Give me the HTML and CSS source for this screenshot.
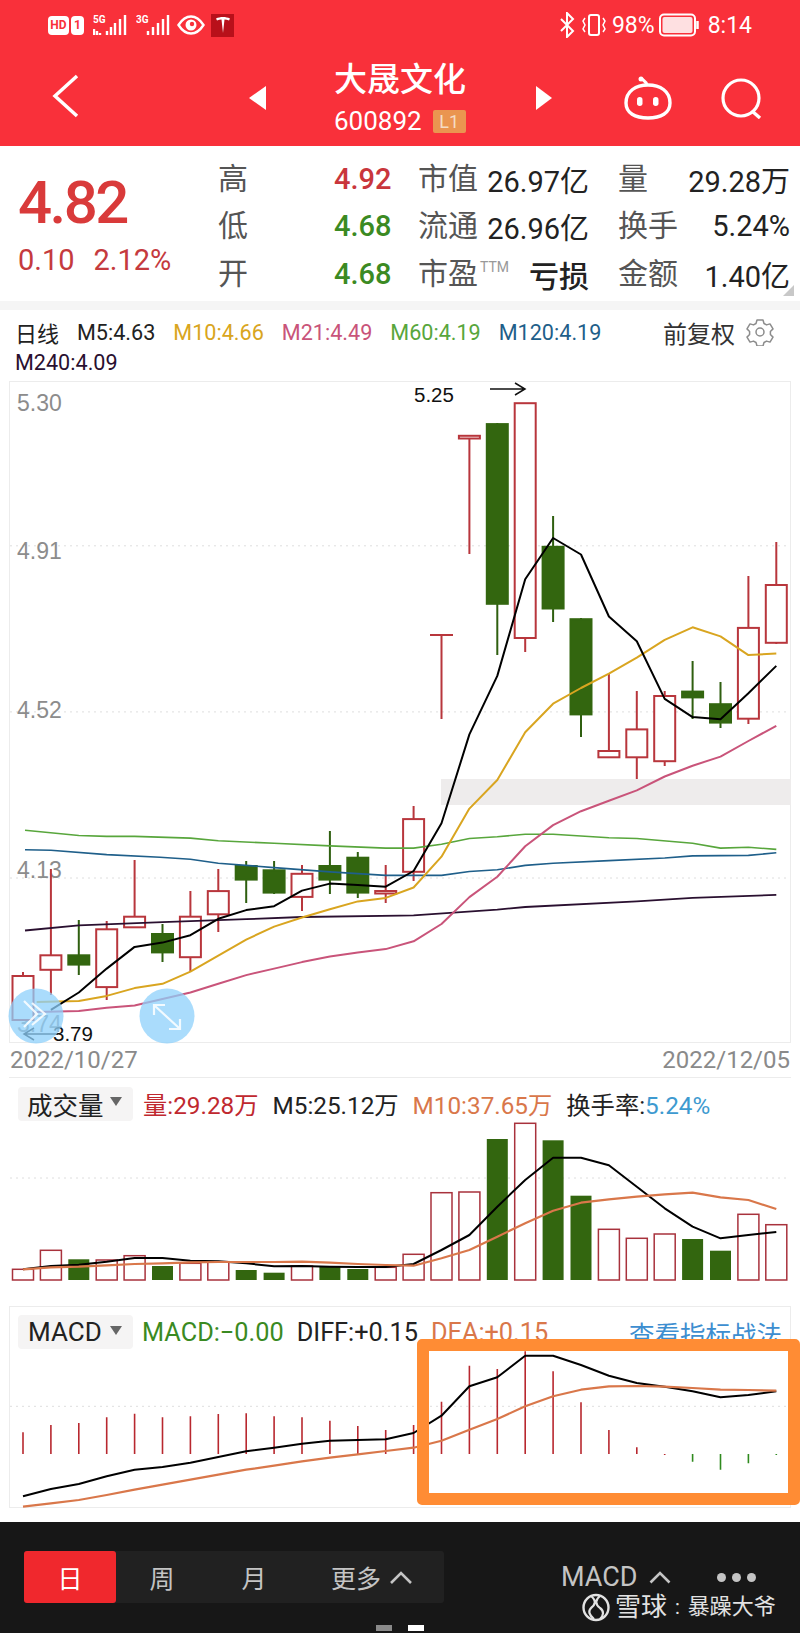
FILE: index.html
```html
<!DOCTYPE html>
<html lang="zh-CN">
<head>
  <meta charset="UTF-8">
  <meta name="viewport" content="width=device-width, initial-scale=1.0">
  <title>大晟文化 600892</title>
  <link rel="stylesheet" href="styles.css">
</head>
<body>
<div class="page">

  <!-- Red header -->
  <header class="header">
    <div class="status">
      <span class="sim sim-hd">HD</span>
      <span class="sim sim-one">1</span>
      <svg class="signal" width="36" height="22" viewBox="0 0 36 22">
        <text x="0" y="9" class="net">5G</text>
        <path d="M1 21v-6M4 21v-4M7 21v-2M14 21v-4M18 21v-8M22 21v-12M27 21v-16M32 21v-20" stroke="#fff" stroke-width="2.4" fill="none"/>
      </svg>
      <svg class="signal" width="34" height="22" viewBox="0 0 34 22">
        <text x="0" y="9" class="net">3G</text>
        <path d="M12 21v-4M17 21v-8M22 21v-12M27 21v-16M32 21v-20" stroke="#fff" stroke-width="2.4" fill="none"/>
      </svg>
      <svg class="eye" width="28" height="20" viewBox="0 0 28 20">
        <path d="M1.5 10C6 3 10 1.5 14 1.5S22 3 26.500 10C22 17 18 18.500 14 18.500S6 17 1.500 10Z" fill="none" stroke="#fff" stroke-width="2.400"/>
        <circle cx="14" cy="10" r="5.500" fill="#fff"/>
        <circle cx="15" cy="9" r="2.200" fill="#f9303a"/>
      </svg>
      <span class="tesla">
        <svg width="14" height="18" viewBox="0 0 14 18">
          <path d="M0 2.500C4 .5 10 .5 14 2.500L13 4.500C11.500 3.800 10 3.500 8.500 3.500L7 17 5.500 3.500C4 3.500 2.500 3.800 1 4.500Z" fill="#fff"/>
        </svg>
      </span>
      <span class="status-right">
        <svg width="17" height="26" viewBox="0 0 17 26">
          <path d="M2 7l12 12-6 6V1l6 6L2 19" fill="none" stroke="#fff" stroke-width="2"/>
        </svg>
        <svg class="vibrate" width="26" height="24" viewBox="0 0 26 24">
          <rect x="8" y="2" width="10" height="20" rx="2" fill="none" stroke="#fff" stroke-width="2"/>
          <path d="M4 5l-2 3 2 4-2 4 2 3M22 5l2 3-2 4 2 4-2 3" fill="none" stroke="#fff" stroke-width="1.500"/>
        </svg>
        <span class="pct">98%</span>
        <svg class="battery" width="41" height="24" viewBox="0 0 41 24">
          <rect x="1" y="1.500" width="35" height="21" rx="4" fill="none" stroke="#fff" stroke-width="2"/>
          <rect x="3.500" y="4" width="30" height="16" rx="2" fill="#fff" opacity=".85"/>
          <path d="M38.500 8v8" stroke="#fff" stroke-width="2.500"/>
        </svg>
        <span class="clock">8:14</span>
      </span>
    </div>
    <nav class="nav">
      <svg class="back" width="27" height="44" viewBox="0 0 27 44">
        <path d="M25 2L3 22l22 20" fill="none" stroke="#fff" stroke-width="3.500"/>
      </svg>
      <span class="tri tri-left"></span>
      <div class="title">
        <div class="name">大晟文化</div>
        <div class="code">600892<span class="level">L1</span></div>
      </div>
      <span class="tri tri-right"></span>
      <svg class="robot" width="50" height="44" viewBox="0 0 50 44">
        <path d="M24 9C23 5 21 5 19 3" fill="none" stroke="#fff" stroke-width="3"/>
        <circle cx="18" cy="3" r="2.500" fill="#fff"/>
        <path d="M25 9C37 9 47 15 47 27C47 37 38 42 25 42S3 37 3 27C3 15 13 9 25 9Z" fill="none" stroke="#fff" stroke-width="3.400"/>
        <rect x="14" y="21" width="5.500" height="9" rx="2.700" fill="#fff"/>
        <rect x="30" y="21" width="5.500" height="9" rx="2.700" fill="#fff"/>
      </svg>
      <svg class="search" width="42" height="41" viewBox="0 0 42 41">
        <circle cx="20" cy="20" r="18" fill="none" stroke="#fff" stroke-width="3.200"/>
        <path d="M31 33l8 7" fill="none" stroke="#fff" stroke-width="3.400"/>
      </svg>
    </nav>
  </header>

  <!-- Quote -->
  <section class="quote">
    <div class="price-block">
      <div class="price">4.82</div>
      <div class="change"><span>0.10</span><span>2.12%</span></div>
    </div>
    <div class="stats">
      <span class="lab">高</span><span class="num rise">4.92</span>
      <span class="lab">市值</span><span class="val">26.97亿</span>
      <span class="lab lab-end">量</span><span class="val">29.28万</span>

      <span class="lab">低</span><span class="num fall">4.68</span>
      <span class="lab">流通</span><span class="val">26.96亿</span>
      <span class="lab lab-end">换手</span><span class="val">5.24%</span>

      <span class="lab">开</span><span class="num fall">4.68</span>
      <span class="lab lab-ttm">市盈<sup>TTM</sup></span><span class="val val-loss">亏损</span>
      <span class="lab lab-end">金额</span><span class="val">1.40亿</span>
    </div>
    <span class="corner"></span>
  </section>

  <div class="strip"></div>

  <!-- MA legend -->
  <div class="ma-legend">
    <div class="ma-row">
      <span class="ma-kind">日线</span>
      <span>M5:4.63</span>
      <span class="c-m10">M10:4.66</span>
      <span class="c-m21">M21:4.49</span>
      <span class="c-m60">M60:4.19</span>
      <span class="c-m120">M120:4.19</span>
      <span class="adjust">前复权
        <svg width="28" height="28" viewBox="0 0 28 28">
          <path d="M11 2h6l1 3.500 2.500 1.400 3.500-1 3 5-2.600 2.600v3l2.600 2.600-3 5-3.500-1-2.500 1.400-1 3.500h-6l-1-3.500-2.500-1.400-3.500 1-3-5 2.600-2.600v-3L1 10.900l3-5 3.500 1L10 5.500Z" fill="none" stroke="#8c8c8c" stroke-width="1.500" stroke-linejoin="round"/>
          <circle cx="14" cy="14" r="4" fill="none" stroke="#8c8c8c" stroke-width="1.500"/>
        </svg>
      </span>
    </div>
    <div class="ma-row c-m240">M240:4.09</div>
  </div>

  <!-- K line chart -->
  <div class="panel panel-main">
    <svg class="plot" width="780" height="660" viewBox="10 381 780 660">
      <path class="grid" d="M10 544.800H790M10 710.900H790M10 877H790"/>
      <rect class="band" x="441" y="778" width="350" height="26"/>

      <g class="axis">
        <text x="17" y="410">5.30</text>
        <text x="17" y="558">4.91</text>
        <text x="17" y="717">4.52</text>
        <text x="17" y="877">4.13</text>
        <text x="17" y="1031" class="axis-low">3.74</text>
      </g>

      <path class="wick-up" d="M23 971V975M50.900 868V994M106.700 920V999M134.600 859V915M190.400 890V970M218.300 868V931M302 864V910M385.700 864V902M413.600 805V880M441.500 634V718M430 634H453M469.400 434V553M525.200 638V651M608.900 673V757M636.800 690V778M664.700 690V765M748.400 575V723M776.300 541V643"/>
      <path class="wick-down" d="M78.800 919V974M162.500 923V961M246.200 860V902M274.100 860V893M329.900 830V893M357.800 851V897M497.300 422V654M553.100 515V621M581 617V736M692.600 660V718M720.500 681V727"/>

      <g class="up">
        <rect x="12.500" y="975" width="21" height="44"/>
        <rect x="40.400" y="954.300" width="21" height="14.500"/>
        <rect x="96.200" y="928.300" width="21" height="57.800"/>
        <rect x="124.100" y="915.700" width="21" height="10.600"/>
        <rect x="179.900" y="915.700" width="21" height="40.500"/>
        <rect x="207.800" y="890.100" width="21" height="23.200"/>
        <rect x="291.500" y="872.800" width="21" height="23.100"/>
        <rect x="375.200" y="890" width="21" height="2.500"/>
        <rect x="403.100" y="818.100" width="21" height="52.700"/>
        <rect x="458.900" y="434.800" width="21" height="2.700"/>
        <rect x="514.700" y="402.200" width="21" height="234.800"/>
        <rect x="598.400" y="750" width="21" height="6.300"/>
        <rect x="626.300" y="728.400" width="21" height="27.900"/>
        <rect x="654.200" y="695" width="21" height="65.200"/>
        <rect x="737.900" y="626.900" width="21" height="90.800"/>
        <rect x="765.800" y="584" width="21" height="57.800"/>
      </g>
      <g class="down">
        <rect x="68.300" y="954.300" width="21" height="9.300"/>
        <rect x="152" y="933" width="21" height="18.400"/>
        <rect x="235.700" y="865" width="21" height="13.600"/>
        <rect x="263.600" y="869.300" width="21" height="22.300"/>
        <rect x="319.400" y="865" width="21" height="13.600"/>
        <rect x="347.300" y="856.700" width="21" height="34.900"/>
        <rect x="486.800" y="423.100" width="21" height="179.700"/>
        <rect x="542.600" y="545.800" width="21" height="61.700"/>
        <rect x="570.500" y="618.200" width="21" height="95.200"/>
        <rect x="682.100" y="690.600" width="21" height="5.800"/>
        <rect x="710" y="703.200" width="21" height="18.400"/>
      </g>

      <polyline class="l-m240" points="25,929.500 78.800,924.300 162.500,921.200 246.200,918.200 302,916 400,914.700 413.600,914.300 497.300,908.600 525.200,906 636.800,900.400 692.600,896.900 776.300,893.900"/>
      <polyline class="l-m120" points="25,848.800 50.900,849.200 106.700,853.600 160,856.200 190.400,858.300 218.300,862.200 274.100,866.600 329.900,870.900 385.700,874.400 413.600,874.400 441.500,874.400 469.400,870.500 497.300,868.800 525.200,864.400 553.100,862.200 608.900,859.600 664.700,857 692.600,854.900 748.400,854.400 776.300,851.800"/>
      <polyline class="l-m60" points="25,829.300 78.800,834.500 106.700,835.400 134.600,835.400 190.400,837.100 218.300,839.700 274.100,842.300 329.900,844.900 385.700,847.100 413.600,847.100 441.500,843.200 469.400,837.500 497.300,835.800 525.200,833.200 553.100,833.200 608.900,836.700 636.800,837.500 692.600,842.300 720.500,847.100 748.400,846.200 776.300,848.400"/>
      <polyline class="l-m21" points="36.700,1011 78.800,1010.100 106.700,1006.700 134.600,1004.500 162.500,998 190.400,991.500 218.300,982.800 246.200,974.100 274.100,967.600 302,961.100 329.900,955.500 357.800,951.600 385.700,948.100 413.600,940.300 441.500,923 469.400,896.100 497.300,875.700 525.200,845.300 553.100,824.100 581,810.200 608.900,799.800 636.800,789.400 664.700,775.500 692.600,764.700 720.500,755.600 748.400,740 776.300,724.800"/>
      <polyline class="l-m10" points="36.700,1001 78.800,1000.100 106.700,994.900 134.600,987.100 162.500,982.800 190.400,970.700 218.300,954.600 246.200,938.600 274.100,925.600 302,916.500 329.900,908.200 357.800,900.400 385.700,896.900 413.600,886.500 441.500,855.700 469.400,807.600 497.300,779 525.200,731.300 553.100,702.700 581,687 608.900,672.700 636.800,656.700 664.700,638.900 692.600,626.300 720.500,635.400 748.400,654.100 776.300,652.400"/>
      <polyline class="l-m5" points="50.900,1008.800 78.800,991.500 106.700,967.600 134.600,945.900 162.500,941.600 190.400,934.200 218.300,917.800 246.200,909.100 274.100,905.200 302,889.600 329.900,882.600 357.800,883.900 385.700,885.700 413.600,870 441.500,822.300 469.400,733.400 497.300,674.900 525.200,578.200 553.100,537 581,553.500 608.900,615.500 636.800,640.200 664.700,697.900 692.600,716.100 720.500,718.300 748.400,692.200 776.300,664.900"/>

      <text class="mark" x="414" y="401">5.25</text>
      <path class="mark-arrow" d="M490 388H524M515 382l10 6-10 6"/>
      <text class="mark" x="53" y="1040">3.79</text>
      <path class="mark-arrow" d="M58 1033H25M34 1027l-10 6 10 6"/>

      <circle class="float-btn" cx="36" cy="1015" r="27.500"/>
      <path class="float-icon" d="M24 1000l13 13-13 13M32 1002l13 11-13 11"/>
      <circle class="float-btn" cx="167" cy="1015" r="27.500"/>
      <path class="float-icon" d="M155 1005l24 22M154 1014v-10h11M180 1018v10h-11"/>
    </svg>
  </div>

  <div class="dates"><span>2022/10/27</span><span>2022/12/05</span></div>

  <!-- Volume -->
  <div class="panel panel-vol">
    <div class="ind-head">
      <span class="ind-btn">成交量<i class="caret"></i></span>
      <span class="c-vol">量:29.28万</span>
      <span>M5:25.12万</span>
      <span class="c-dea">M10:37.65万</span>
      <span>换手率:<span class="c-rate">5.24%</span></span>
    </div>
    <svg class="plot" width="780" height="159" viewBox="10 1123 780 159">
      <path class="grid" d="M10 1178H790"/>
      <g class="vol-up">
        <rect x="12.500" y="1269.300" width="21" height="10.700"/>
        <rect x="40.400" y="1250.300" width="21" height="29.700"/>
        <rect x="96.200" y="1260" width="21" height="20"/>
        <rect x="124.100" y="1255.700" width="21" height="24.300"/>
        <rect x="179.900" y="1263.300" width="21" height="16.700"/>
        <rect x="207.800" y="1261.700" width="21" height="18.300"/>
        <rect x="291.500" y="1266" width="21" height="14"/>
        <rect x="375.200" y="1267.300" width="21" height="12.700"/>
        <rect x="403.100" y="1254.300" width="21" height="25.700"/>
        <rect x="431" y="1192.700" width="21" height="87.300"/>
        <rect x="458.900" y="1192" width="21" height="88"/>
        <rect x="514.700" y="1123.300" width="21" height="156.700"/>
        <rect x="598.400" y="1229.300" width="21" height="50.700"/>
        <rect x="626.300" y="1238.300" width="21" height="41.700"/>
        <rect x="654.200" y="1234" width="21" height="46"/>
        <rect x="737.900" y="1214.300" width="21" height="65.700"/>
        <rect x="765.800" y="1224.700" width="21" height="55.300"/>
      </g>
      <g class="vol-down">
        <rect x="68.300" y="1259.300" width="21" height="20.700"/>
        <rect x="152" y="1266" width="21" height="14"/>
        <rect x="235.700" y="1270" width="21" height="10"/>
        <rect x="263.600" y="1272.700" width="21" height="7.300"/>
        <rect x="319.400" y="1266.700" width="21" height="13.300"/>
        <rect x="347.300" y="1269" width="21" height="11"/>
        <rect x="486.800" y="1139" width="21" height="141"/>
        <rect x="542.600" y="1140.300" width="21" height="139.700"/>
        <rect x="570.500" y="1195.700" width="21" height="84.300"/>
        <rect x="682.100" y="1239" width="21" height="41"/>
        <rect x="710" y="1250.700" width="21" height="29.300"/>
      </g>
      <polyline class="l-black" points="23,1269.300 50.900,1266 78.800,1264.700 106.700,1261.700 134.600,1258 162.500,1258 190.400,1260.700 218.300,1261.300 246.200,1263.300 274.100,1266.300 302,1266 329.900,1266.700 357.800,1267 385.700,1267 413.600,1264 441.500,1250 469.400,1235 497.300,1206.700 525.200,1180 553.100,1157.700 581,1157.700 608.900,1165.300 636.800,1186.700 664.700,1208.300 692.600,1226.700 720.500,1238.300 748.400,1235 776.300,1232"/>
      <polyline class="l-orange" points="23,1269.300 50.900,1267.300 78.800,1266.700 106.700,1265.300 134.600,1264 162.500,1263.300 190.400,1262.300 218.300,1262 246.200,1262 274.100,1262 302,1261.700 329.900,1262.700 357.800,1264 385.700,1265 413.600,1265.700 441.500,1258.300 469.400,1250 497.300,1236.700 525.200,1223.300 553.100,1210.700 581,1202.700 608.900,1199.300 636.800,1196.700 664.700,1194.300 692.600,1192.700 720.500,1197.300 748.400,1200 776.300,1209"/>
    </svg>
  </div>

  <!-- MACD -->
  <div class="panel panel-macd">
    <div class="ind-head ind-head-macd">
      <span class="ind-btn">MACD<i class="caret"></i></span>
      <span class="c-macd">MACD:−0.00</span>
      <span>DIFF:+0.15</span>
      <span class="c-dea">DEA:+0.15</span>
      <span class="ind-link">查看指标战法</span>
    </div>
    <svg class="plot" width="780" height="158" viewBox="10 1350 780 158">
      <path class="grid" d="M10 1407.300H790"/>
      <path class="bar-up" d="M23 1455V1433.300M50.900 1455V1426M78.800 1455V1424M106.700 1455V1418.300M134.600 1455V1414.700M162.500 1455V1418.300M190.400 1455V1417.300M218.300 1455V1415M246.200 1455V1414.300M274.100 1455V1417.300M302 1455V1418.300M329.900 1455V1421.700M357.800 1455V1427M385.700 1455V1431M413.600 1455V1426M441.500 1455V1402.700M469.400 1455V1366.700M497.300 1455V1370M525.200 1455V1352.300M553.100 1455V1372.300M581 1455V1403.300M608.900 1455V1431M636.800 1455V1448.300M664.700 1455V1456"/>
      <path class="bar-down" d="M692.600 1455V1462.700M720.500 1455V1470.700M748.400 1455V1464.300M776.300 1455V1456"/>
      <polyline class="l-black" points="23,1497.300 50.900,1490 78.800,1485 106.700,1477.300 134.600,1470.700 162.500,1468 190.400,1463.700 218.300,1458 246.200,1452.300 274.100,1448.700 302,1444.700 329.900,1441.700 357.800,1441 385.700,1440.300 413.600,1434 441.500,1416.700 469.400,1387.300 497.300,1378.300 525.200,1356.700 553.100,1356.700 581,1366 608.900,1376.700 636.800,1384 664.700,1387.700 692.600,1392.300 720.500,1398.300 748.400,1396 776.300,1392.300"/>
      <polyline class="l-orange" points="23,1507.700 50.900,1504.300 78.800,1501 106.700,1496 134.600,1490.700 162.500,1485.700 190.400,1480.700 218.300,1475.700 246.200,1470.700 274.100,1466.700 302,1462.300 329.900,1458.700 357.800,1455.300 385.700,1452 413.600,1448.700 441.500,1441.700 469.400,1430.700 497.300,1420 525.200,1407.300 553.100,1397.300 581,1390.700 608.900,1387.300 636.800,1387 664.700,1387.700 692.600,1389 720.500,1390.700 748.400,1391 776.300,1391.700"/>
    </svg>
  </div>

  <!-- Orange box drawn over the screenshot -->
  <div class="highlight"></div>

  <!-- Bottom toolbar -->
  <footer class="toolbar">
    <div class="periods">
      <span class="period period-on">日</span>
      <span class="period">周</span>
      <span class="period">月</span>
      <span class="period period-more">更多
        <svg width="24" height="15" viewBox="0 0 24 15"><path d="M2 13L12 3l10 10" fill="none" stroke="#c4c4c4" stroke-width="2.600"/></svg>
      </span>
    </div>
    <div class="tool-right">
      <span class="tool-macd">MACD
        <svg width="22" height="14" viewBox="0 0 22 14"><path d="M1.500 12.500L11 3l9.500 9.500" fill="none" stroke="#c4c4c4" stroke-width="2.600"/></svg>
      </span>
      <span class="dots"><i></i><i></i><i></i></span>
    </div>
    <div class="watermark">
      <svg width="28" height="29" viewBox="0 0 28 29">
        <circle cx="14" cy="14.500" r="12.500" fill="none" stroke="#e2e2e2" stroke-width="2.400"/>
        <path d="M9 3c6 5 4 9 0 12-3 3-2 7 3 11M18 3c-5 4-5 8 0 12 4 3 4 7 0 11" fill="none" stroke="#e2e2e2" stroke-width="2.200"/>
      </svg>
      <span>雪球</span><span class="wm-sep">:</span><span>暴躁大爷</span>
    </div>
    <div class="pager"><i></i><i class="pager-on"></i></div>
  </footer>

</div>
</body>
</html>
```

FILE: styles.css
```css
* {
  box-sizing: border-box;
}
body {
  margin: 0;
  background: #fff;
  color: #222;
  font-family: Roboto, "Noto Sans CJK SC", sans-serif;
}
.page {
  position: relative;
  width: 800px;
  height: 1633px;
  overflow: hidden;
}

/* header */
.header {
  height: 146px;
  background: #f9303a;
  color: #fff;
}
.status {
  display: flex;
  align-items: center;
  height: 50px;
  padding-left: 48px;
}
.sim {
  display: flex;
  align-items: center;
  justify-content: center;
  height: 19px;
  background: #fff;
  color: #f9303a;
  border-radius: 4px;
  font-size: 12px;
  font-weight: 700;
}
.sim-hd {
  width: 21px;
}
.sim-one {
  width: 13px;
  margin-left: 2px;
}
.signal {
  margin-left: 9px;
}
.signal + .signal {
  margin-left: 7px;
}
.net {
  fill: #fff;
  font-size: 10px;
  font-weight: 700;
}
.eye {
  margin-left: 7px;
}
.tesla {
  display: flex;
  align-items: center;
  justify-content: center;
  width: 23px;
  height: 23px;
  margin-left: 6px;
  background: #b8101a;
}
.status-right {
  display: flex;
  align-items: center;
  margin-left: auto;
  padding-right: 48px;
  font-size: 23px;
}
.vibrate {
  margin-left: 5px;
}
.pct {
  margin-left: 5px;
}
.battery {
  margin-left: 4px;
}
.clock {
  margin-left: 8px;
}
.nav {
  display: flex;
  align-items: center;
  height: 96px;
  padding-left: 52px;
}
.back {
  margin-top: -4px;
}
.tri {
  width: 0;
  height: 0;
  border-top: 12.500px solid transparent;
  border-bottom: 12.500px solid transparent;
}
.tri-left {
  margin-left: 170px;
  border-right: 17px solid #fff;
}
.tri-right {
  margin-left: 68px;
  border-left: 16px solid #fff;
}
.title {
  width: 134px;
  margin-left: 68px;
}
.name {
  margin-top: -3px;
  font-size: 33px;
  font-weight: 500;
  line-height: 40px;
  white-space: nowrap;
}
.code {
  display: flex;
  align-items: center;
  margin-top: 9px;
  font-size: 26px;
  line-height: 24px;
  white-space: nowrap;
}
.level {
  flex: none;
  width: 33px;
  height: 23px;
  margin-left: 11px;
  background: #ea9550;
  border-radius: 2px;
  color: #f6dcc5;
  font-size: 18px;
  line-height: 23px;
  text-align: center;
}
.robot {
  margin-left: 71px;
}
.search {
  margin-left: 48px;
}

/* quote */
.quote {
  position: relative;
  display: flex;
  height: 155px;
}
.price-block {
  width: 218px;
  padding: 22px 0 0 18px;
}
.price {
  color: #d93a3a;
  font-size: 60px;
  font-weight: 500;
  letter-spacing: -2.500px;
  line-height: 70px;
}
.change {
  display: flex;
  gap: 19px;
  margin-top: 6px;
  color: #c53a3e;
  font-size: 29px;
  line-height: 32px;
}
.stats {
  display: grid;
  grid-template-columns: 116px 84px 71px 100px 90px 111px;
  grid-auto-rows: 47.500px;
  align-items: center;
  padding-top: 9px;
  font-size: 29px;
  white-space: nowrap;
}
.lab {
  color: #555;
  font-size: 30px;
  line-height: 36px;
}
.lab-end {
  padding-left: 29px;
}
.lab-ttm sup {
  margin-left: 2px;
  color: #999;
  font-size: 14px;
  line-height: 0;
  vertical-align: 12px;
}
.num {
  font-weight: 500;
}
.rise {
  color: #c9363c;
}
.fall {
  color: #3b8a23;
}
.val {
  justify-self: end;
  color: #222;
}
.val-loss {
  font-size: 30px;
  font-weight: 500;
}
.corner {
  position: absolute;
  right: 6px;
  bottom: 5px;
  width: 0;
  height: 0;
  border-left: 11px solid transparent;
  border-bottom: 11px solid #c8c8c8;
}
.strip {
  height: 9px;
  background: #f5f5f5;
}

/* moving averages */
.ma-legend {
  height: 71px;
  padding: 7px 26px 0 15px;
  font-size: 21.600px;
}
.ma-row {
  display: flex;
  align-items: center;
  gap: 18px;
  height: 30px;
  white-space: nowrap;
}
.ma-kind {
  font-size: 22px;
}
.adjust {
  display: flex;
  align-items: center;
  gap: 11px;
  margin-left: auto;
  color: #333;
  font-size: 24px;
}
.c-m10 {
  color: #d9a520;
}
.c-m21 {
  color: #c9547a;
}
.c-m60 {
  color: #58a63c;
}
.c-m120 {
  color: #1f5f8a;
}
.c-m240 {
  color: #2a1030;
}

/* chart panels */
.panel {
  width: 782px;
  margin-left: 9px;
  border: 1px solid #ececec;
}
.panel-main {
  height: 662px;
}
.panel-vol {
  height: 205px;
  border-width: 1px 0 0;
  padding-left: 1px;
}
.panel-macd {
  height: 202px;
  margin-top: 24px;
}
.plot {
  display: block;
  overflow: visible;
}
.grid {
  fill: none;
  stroke: #dedede;
  stroke-width: 1;
  stroke-dasharray: 2 4;
}
.band {
  fill: #eeecec;
}
.axis {
  fill: #8c8c8c;
  font-family: "Liberation Sans", sans-serif;
  font-size: 23px;
}
.wick-up {
  fill: none;
  stroke: #b8363c;
  stroke-width: 2;
}
.wick-down {
  fill: none;
  stroke: #2f5f10;
  stroke-width: 2;
}
.up rect {
  fill: #fff;
  stroke: #b8363c;
  stroke-width: 2;
}
.down rect {
  fill: #33660f;
  stroke: #33660f;
  stroke-width: 2;
}
polyline {
  fill: none;
  stroke-linejoin: round;
}
.l-m5,
.l-black {
  stroke: #000;
  stroke-width: 2;
}
.l-m10 {
  stroke: #d9a520;
  stroke-width: 2;
}
.l-m21 {
  stroke: #c9547a;
  stroke-width: 2;
}
.l-m60 {
  stroke: #58a63c;
  stroke-width: 1.600;
}
.l-m120 {
  stroke: #1f5f8a;
  stroke-width: 1.600;
}
.l-m240 {
  stroke: #2a1030;
  stroke-width: 1.800;
}
.l-orange {
  stroke: #d9774a;
  stroke-width: 2.200;
}
.mark {
  fill: #111;
  font-family: "Liberation Sans", sans-serif;
  font-size: 20.500px;
}
.mark-arrow {
  fill: none;
  stroke: #111;
  stroke-width: 1.500;
}
.float-btn {
  fill: #8ed0fb;
  fill-opacity: .75;
}
.float-icon {
  fill: none;
  stroke: #fff;
  stroke-width: 2.200;
  stroke-opacity: .85;
}
.dates {
  display: flex;
  justify-content: space-between;
  height: 34px;
  padding: 2px 10px 0;
  color: #8a8a8a;
  font-size: 24px;
  line-height: 30px;
}

/* indicator headers */
.ind-head {
  display: flex;
  align-items: center;
  gap: 14px;
  height: 45px;
  padding: 8px 0 2px 8px;
  font-size: 24.300px;
  white-space: nowrap;
}
.ind-head-macd {
  position: relative;
  gap: 13px;
  height: 42px;
  padding: 8px 0 0 8px;
  font-size: 25.300px;
}
.ind-btn {
  display: flex;
  align-items: center;
  width: 115px;
  height: 34px;
  padding-left: 9px;
  margin-right: -4px;
  background: #f5f4f4;
  border-radius: 4px;
  font-size: 25.500px;
}
.caret {
  width: 0;
  height: 0;
  margin-left: 6px;
  margin-top: -4px;
  border-left: 6px solid transparent;
  border-right: 6px solid transparent;
  border-top: 9px solid #666;
}
.ind-head-macd .ind-btn {
  margin-right: -4px;
  padding-left: 10px;
  font-size: 26px;
}
.ind-head-macd .caret {
  margin-left: 8px;
}
.c-vol {
  color: #c0282f;
}
.c-dea {
  color: #d9774a;
}
.c-rate {
  color: #3d9ad0;
}
.c-macd {
  color: #3a8a22;
}
.ind-link {
  margin-left: auto;
  margin-right: 8px;
  color: #3d8ed0;
  font-size: 25.500px;
}
.bar-up {
  fill: none;
  stroke: #b8282f;
  stroke-width: 1.600;
}
.bar-down {
  fill: none;
  stroke: #2f8a1e;
  stroke-width: 1.600;
}
.vol-up rect {
  fill: #fff;
  stroke: #a8323c;
  stroke-width: 1.500;
}
.vol-down rect {
  fill: #33660f;
}

/* orange annotation */
.highlight {
  position: absolute;
  left: 417px;
  top: 1339px;
  width: 383px;
  height: 166px;
  border: 12px solid #ff8c34;
  border-radius: 5px;
}

/* toolbar */
.toolbar {
  position: relative;
  display: flex;
  height: 111px;
  margin-top: 14px;
  padding: 29px 0 0 24px;
  background: #171717;
  color: #c4c4c4;
}
.periods {
  display: flex;
  align-items: center;
  width: 420px;
  height: 52px;
  background: #212121;
  border-radius: 3px;
}
.period {
  display: flex;
  align-items: center;
  justify-content: center;
  width: 92px;
  height: 52px;
  font-size: 25px;
}
.period-on {
  background: #f0282d;
  border-radius: 3px;
  color: #fff;
}
.period-more {
  gap: 8px;
  width: 128px;
  margin-left: 8px;
}
.tool-right {
  display: flex;
  align-items: center;
  height: 52px;
  margin-left: 117px;
}
.tool-macd {
  display: flex;
  align-items: center;
  gap: 11px;
  font-size: 27px;
}
.dots {
  display: flex;
  gap: 6px;
  margin-left: 46px;
}
.dots i {
  width: 9px;
  height: 9px;
  background: #c4c4c4;
  border-radius: 50%;
}
.watermark {
  position: absolute;
  left: 582px;
  top: 70px;
  display: flex;
  align-items: center;
  gap: 5px;
  color: #e2e2e2;
  font-size: 26px;
  line-height: 30px;
}
.wm-sep {
  margin: 0 3px;
  font-size: 20px;
}
.watermark span:last-child {
  font-size: 22px;
}
.pager {
  position: absolute;
  left: 376px;
  bottom: 2px;
  display: flex;
  gap: 16px;
}
.pager i {
  width: 16px;
  height: 6px;
  background: #8a8a8a;
}
.pager .pager-on {
  background: #fff;
}
```
